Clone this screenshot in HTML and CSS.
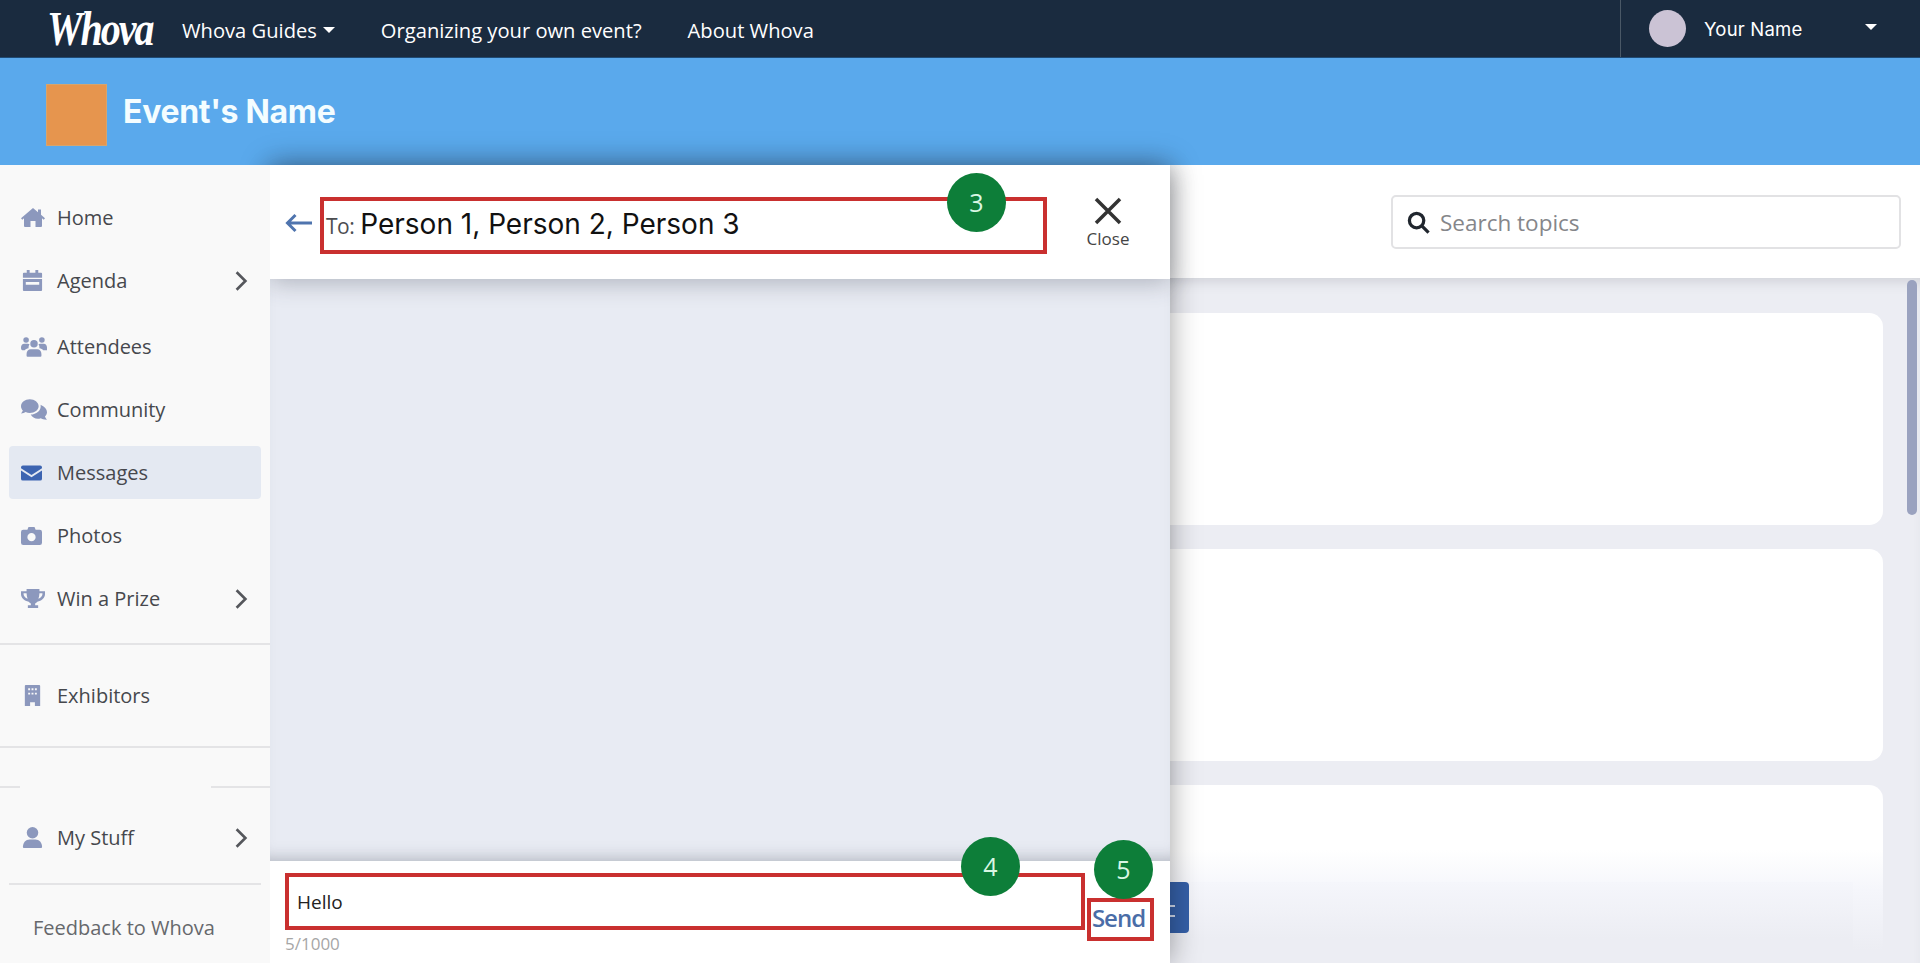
FILE: index.html
```html
<!DOCTYPE html>
<html lang="en">
<head>
<meta charset="utf-8">
<title>Whova - Messages</title>
<link rel="stylesheet" href="styles.css">
</head>
<body>
<header class="topbar">
  <div class="logo">Whova</div>
  <nav class="topnav">
    <a class="topnav-link guides">Whova Guides<span class="caret"></span></a>
    <a class="topnav-link">Organizing your own event?</a>
    <a class="topnav-link">About Whova</a>
  </nav>
  <div class="user">
    <span class="avatar"></span>
    <span class="user-name">Your Name</span>
    <span class="caret user-caret"></span>
  </div>
</header>
<section class="banner">
  <div class="event-logo"></div>
  <h1 class="event-name">Event's Name</h1>
</section>
<main class="main">
  <aside class="sidebar">
    <ul class="nav-list">
      <li class="nav-row"><svg class="nav-icon ic-home" viewBox="0 3 24 19"><path d="M12 3 0 13.2l1.300 1.500L3 13.300V21a1 1 0 0 0 1 1h5.500v-6h5v6H20a1 1 0 0 0 1-1v-7.700l1.700 1.400L24 13.200l-4-3.400V4.500h-3v2.800z"/></svg><span class="nav-text">Home</span></li>
      <li class="nav-row agenda"><svg class="nav-icon ic-tall" viewBox="0 0 24 24"><path d="M6 1h3v3h6V1h3v3h3a1 1 0 0 1 1 1v4H2V5a1 1 0 0 1 1-1h3zM2 10.500h20V22a1 1 0 0 1-1 1H3a1 1 0 0 1-1-1zm3 3v3h14v-3z"/></svg><span class="nav-text">Agenda</span><svg class="chev" viewBox="0 0 12 20"><path d="m2 2 8 8-8 8"/></svg></li>
      <li class="nav-row"><svg class="nav-icon ic-wide" viewBox="0 0 28 24"><circle cx="5.500" cy="5" r="3"/><circle cx="22.500" cy="5" r="3"/><circle cx="14" cy="9" r="4"/><path d="M0 13c0-2.500 1.500-4 3.500-4h4c.7 0 1.200.2 1.700.5-1 1.500-1.200 2.800-1 4.500-2 .4-3.200 1-4.200 2H1.500C.6 16 0 15 0 13zm28 0c0-2.500-1.500-4-3.500-4h-4c-.7 0-1.200.2-1.700.5 1 1.500 1.200 2.800 1 4.500 2 .4 3.200 1 4.200 2h4.500c.9 0 1.500-1 1.500-3zM6 20c0-3 2-5 4.500-5h7c2.500 0 4.500 2 4.500 5v2a1 1 0 0 1-1 1H7a1 1 0 0 1-1-1z"/></svg><span class="nav-text">Attendees</span></li>
      <li class="nav-row"><svg class="nav-icon ic-wide" viewBox="0 0 28 24"><path d="M9.500 1C4.300 1 0 4.300 0 8.500c0 1.800.8 3.400 2 4.700-.4 1.200-1.200 2.300-2 3.200 2 0 3.800-.7 5-1.600 1.400.6 2.900.9 4.500.9 5.200 0 9.500-3.300 9.500-7.200S14.700 1 9.500 1z"/><path d="M21 7c.2.500.2 1 .2 1.500 0 5-4.800 8.800-10.700 9 1.300 2.700 4.300 4.500 7.500 4.500 1.100 0 2.300-.2 3.300-.6 1.300.9 3 1.600 6.700 1.600-.8-.8-1.800-2.200-2.200-3.400 1.400-1.300 2.200-3 2.200-4.600 0-3.400-2.600-6.200-7-8z"/></svg><span class="nav-text">Community</span></li>
      <li class="nav-row active"><svg class="nav-icon ic-small" viewBox="0 0 28 24"><path d="M2.500 2h23A2.500 2.500 0 0 1 28 4.500v1L14 14.500 0 5.500v-1A2.500 2.500 0 0 1 2.500 2zM0 8.500l14 9 14-9v11a2.500 2.500 0 0 1-2.500 2.500h-23A2.500 2.500 0 0 1 0 19.500z"/></svg><span class="nav-text">Messages</span></li>
      <li class="nav-row"><svg class="nav-icon ic-small" viewBox="0 0 28 24"><path fill-rule="evenodd" d="M3 3.500h5.500L10 0h8l1.500 3.500H25a3 3 0 0 1 3 3V21a3 3 0 0 1-3 3H3a3 3 0 0 1-3-3V6.500a3 3 0 0 1 3-3zM14 8a5.500 5.500 0 1 0 0 11 5.500 5.500 0 0 0 0-11z"/></svg><span class="nav-text">Photos</span></li>
      <li class="nav-row"><svg class="nav-icon ic-trophy" viewBox="0 0 28 24"><path fill-rule="evenodd" d="M6.500 1h15v2.500H28V7c0 4-4 8-9 8.700-.7 1-1.500 1.700-2.500 2.100V20H20v3H8v-3h3.500v-2.200c-1-.4-1.800-1.100-2.500-2.100C4 15 0 11 0 7V3.500h6.500zm0 5H3v1c0 2 2 4.300 4.700 5.300C7 10.500 6.600 8.500 6.500 6zm15 0c-.1 2.500-.5 4.500-1.200 6.300C23 11.300 25 9 25 7V6z"/></svg><span class="nav-text">Win a Prize</span><svg class="chev" viewBox="0 0 12 20"><path d="m2 2 8 8-8 8"/></svg></li>
    </ul>
    <hr class="rule first-rule">
    <div class="nav-row exhibitors"><svg class="nav-icon ic-tall" viewBox="0 0 24 24"><path fill-rule="evenodd" d="M5 1h14a1 1 0 0 1 1 1v21h-5.500v-4h-5v4H4V2a1 1 0 0 1 1-1zm2.500 3.500v2h2v-2zm3.500 0v2h2v-2zm3.500 0v2h2v-2zM7.500 9v2h2V9zM11 9v2h2V9zm3.500 0v2h2V9z"/></svg><span class="nav-text">Exhibitors</span></div>
    <hr class="rule second-rule">
    <div class="split-rule"><span class="split-left"></span><span class="split-right"></span></div>
    <div class="nav-row mystuff"><svg class="nav-icon ic-tall" viewBox="0 0 24 24"><circle cx="12" cy="7" r="6"/><path d="M2 22c0-5 3-8 7-8h6c4 0 7 3 7 8a1 1 0 0 1-1 1H3a1 1 0 0 1-1-1z"/></svg><span class="nav-text">My Stuff</span><svg class="chev" viewBox="0 0 12 20"><path d="m2 2 8 8-8 8"/></svg></div>
    <hr class="rule inset-rule">
    <a class="feedback">Feedback to Whova</a>
  </aside>

  <section class="modal">
    <div class="modal-head">
      <svg class="back" viewBox="0 0 28 20"><path d="M27 10H3M10.500 2 2.500 10l8 8"/></svg>
      <div class="to-box">
        <span class="to-label">To:</span>
        <span class="to-names">Person 1, Person 2, Person 3</span>
        <span class="step step-3">3</span>
      </div>
      <div class="close">
        <svg class="close-x" viewBox="0 0 28 28"><path d="m2 2 24 24M26 2 2 26"/></svg>
        <span class="close-text">Close</span>
      </div>
    </div>
    <div class="thread"></div>
    <div class="composer">
      <div class="composer-row">
        <div class="msg-box">Hello<span class="step step-4">4</span></div>
        <div class="send-box">Send<span class="step step-5">5</span></div>
      </div>
      <div class="counter">5/1000</div>
    </div>
  </section>

  <section class="topics">
    <div class="topics-head">
      <div class="search">
        <svg class="search-icon" viewBox="0 0 24 24"><circle cx="10" cy="10" r="7.500"/><path d="m15.500 15.500 7 7"/></svg>
        <span class="search-text">Search topics</span>
      </div>
    </div>
    <div class="topics-body">
      <div class="card"></div>
      <div class="card"></div>
      <div class="card card-last"></div>
      <div class="fade"></div>
      <div class="clipped-btn"></div>
      <div class="scroll-thumb"></div>
    </div>
  </section>
</main>
</body>
</html>
```
FILE: styles.css
```css
* { box-sizing: border-box; }
html, body { margin: 0; height: 963px; overflow: hidden; }
body {
  width: 1920px;
  font-family: "Open Sans", "Noto Sans", sans-serif;
  color: #46484d;
  background: #ecedf3;
  display: flex;
  flex-direction: column;
}

/* top bar */
.topbar {
  height: 58px;
  flex: none;
  background: #1a2b3f;
  border-bottom: 1px solid #1f4a74;
  display: flex;
  align-items: center;
  color: #fff;
  position: relative;
  z-index: 5;
}
.logo {
  margin-left: 47px;
  width: 110px;
  font: italic 700 40px/58px "Liberation Serif", serif;
  letter-spacing: -2px;
  transform: scaleY(1.2);
}
.topnav { display: flex; margin-left: 25px; gap: 46px; font-size: 20.150px; padding-top: 2px; }
.topnav-link { color: #fff; display: flex; align-items: center; white-space: nowrap; }
.caret {
  width: 0; height: 0;
  border-left: 6px solid transparent;
  border-right: 6px solid transparent;
  border-top: 6px solid #fff;
  margin-left: 6px;
}
.user {
  margin-left: auto;
  width: 300px;
  height: 57px;
  border-left: 1px solid #4a5866;
  display: flex;
  align-items: center;
  padding-left: 28px;
}
.avatar { width: 37px; height: 37px; border-radius: 50%; background: #cbc3d5; }
.user-name { margin-left: 18px; font: 400 18.500px "Inter", sans-serif; letter-spacing: .2px; padding-top: 1px; }
.user-caret { margin-left: auto; margin-right: 43px; margin-top: -3px; }

/* banner */
.banner {
  height: 107px;
  flex: none;
  background: #5aa9ec;
  display: flex;
  align-items: center;
  padding-left: 46px;
}
.event-logo { width: 61px; height: 62px; background: #e6954e; border: 1px solid #d6a56e; margin-top: 6px; }
.event-name {
  margin: 0 0 0 16px;
  font: 700 32px "Inter", sans-serif;
  color: #f4fdff;
  letter-spacing: -.3px;
}

/* layout */
.main { flex: 1; display: flex; min-height: 0; }

/* sidebar */
.sidebar {
  width: 270px;
  flex: none;
  background: #f9f9f9;
  position: relative;
  z-index: 3;
  padding-top: 26px;
}
.nav-list { list-style: none; margin: 0; padding: 0; display: flex; flex-direction: column; gap: 10px; }
.nav-row {
  height: 53px;
  margin: 0 9px;
  padding: 0 13px 0 12px;
  display: grid;
  grid-template-columns: 36px 1fr auto;
  align-items: center;
  font-size: 20px;
  border-radius: 4px;
}
.agenda { margin-bottom: 3px; }
.active { background: #e4e9f2; }
.active .nav-icon { fill: #3c64b1; }
.nav-icon { fill: #8c98bd; display: block; }
.ic-home { width: 24px; height: 21px; }
.ic-tall { width: 23px; height: 23px; }
.ic-wide { width: 26px; height: 23px; }
.ic-small { width: 21px; height: 18px; }
.ic-trophy { width: 24px; height: 21px; }
.nav-text { white-space: nowrap; }
.chev { width: 14px; height: 22px; fill: none; stroke: #55575c; stroke-width: 2.400; }
.rule { border: 0; border-top: 2px solid #e4e4e6; margin: 0; }
.first-rule { margin-top: 18px; }
.exhibitors { margin-top: 24px; }
.second-rule { margin-top: 24px; }
.split-rule { display: flex; justify-content: space-between; margin-top: 38px; }
.split-left { width: 20px; border-top: 2px solid #e4e4e6; }
.split-right { width: 59px; border-top: 2px solid #e4e4e6; }
.mystuff { margin-top: 23px; }
.inset-rule { margin: 19px 9px 0; }
.feedback { display: block; margin: 29px 0 0 33px; font-size: 20px; color: #66686c; white-space: nowrap; }

/* modal */
.modal {
  width: 900px;
  flex: none;
  display: flex;
  flex-direction: column;
  position: relative;
  z-index: 2;
  box-shadow: 0 0 28px rgba(0, 0, 0, .38);
  background: #e8ebf3;
}
.modal-head {
  height: 114px;
  flex: none;
  background: #fff;
  display: flex;
  align-items: center;
  padding-left: 15px;
  box-shadow: 0 4px 22px rgba(60, 65, 80, .32);
  position: relative;
  z-index: 1;
}
.back { width: 28px; height: 20px; fill: none; stroke: #4f74ae; stroke-width: 3; flex: none; margin-right: 7px; margin-top: 2px; }
.to-box {
  width: 727px;
  height: 57px;
  border: 4px solid #c9302f;
  display: flex;
  align-items: center;
  padding: 0 0 3px 2px;
  position: relative;
  margin-top: 7px;
}
.to-label { font-size: 21px; color: #4c4d50; margin-right: 6px; letter-spacing: -.5px; padding-top: 3px; }
.to-names { font: 400 28px "Inter", sans-serif; color: #111; white-space: nowrap; }
.close {
  margin-left: 39px;
  width: 44px;
  display: flex;
  flex-direction: column;
  align-items: center;
  margin-top: 2px;
}
.close-x { width: 28px; height: 28px; fill: none; stroke: #333; stroke-width: 3.500; }
.close-text { font-size: 17px; color: #444; margin-top: 2px; white-space: nowrap; }
.thread { flex: 1; box-shadow: inset 0 -14px 16px -12px rgba(70, 75, 90, .35); }
.composer { height: 102px; flex: none; background: #fff; padding: 12px 0 0 15px; }
.composer-row { display: flex; gap: 2px; }
.msg-box {
  width: 800px;
  height: 57px;
  border: 4px solid #c9302f;
  display: flex;
  align-items: center;
  padding: 1px 0 0 8px;
  font-size: 19px;
  color: #222;
  position: relative;
}
.send-box {
  width: 67px;
  height: 43px;
  margin-top: 25px;
  border: 4px solid #c9302f;
  font-size: 24px;
  font-weight: 600;
  letter-spacing: -1px;
  color: #4a6da7;
  display: flex;
  align-items: center;
  justify-content: center;
  padding: 0 4px 4px 0;
  position: relative;
}
.counter { font-size: 17px; color: #a6a6a6; line-height: 20px; margin-top: -7px; }
.step {
  position: absolute;
  width: 59px;
  height: 59px;
  border-radius: 50%;
  background: #0d7e39;
  color: #d9f7e4;
  font: 400 25px/59px "Open Sans", sans-serif;
  letter-spacing: 0;
  text-align: center;
  z-index: 2;
}
.step-3 { top: -28px; left: 623px; }
.step-4 { top: -40px; right: 61px; }
.step-5 { top: -62px; right: -3px; }

/* right panel */
.topics { flex: 1; display: flex; flex-direction: column; min-width: 0; position: relative; }
.topics-head {
  height: 113px;
  flex: none;
  background: #fff;
  display: flex;
  align-items: flex-start;
  justify-content: flex-end;
  padding: 30px 19px 0 0;
}
.search {
  width: 510px;
  height: 54px;
  border: 2px solid #e2e2e4;
  border-radius: 5px;
  display: flex;
  align-items: center;
  padding-left: 14px;
}
.search-icon { width: 23px; height: 23px; fill: none; stroke: #20262e; stroke-width: 3.400; flex: none; }
.search-text { margin-left: 10px; font-size: 22.500px; color: #85868a; }
.topics-body {
  flex: 1;
  min-height: 0;
  position: relative;
  overflow: hidden;
  background: #ecedf3;
  box-shadow: inset 0 10px 14px -8px rgba(80, 85, 95, .22);
  padding: 35px 37px 0 0;
  display: flex;
  flex-direction: column;
  gap: 24px;
}
.card { height: 212px; flex: none; background: #fff; border-radius: 0 14px 14px 0; }
.card-last { background: linear-gradient(#fff 65px, #f5f6fb 105px, #ecedf3 165px); }
.fade {
  position: absolute;
  left: 0; right: 67px; bottom: 0;
  height: 81px;
  background: linear-gradient(#f5f6fb, #ecedf3 70%);
}
.clipped-btn {
  position: absolute;
  left: 0;
  top: 604px;
  width: 19px;
  height: 51px;
  background: #3560a8;
  border-radius: 0 4px 4px 0;
}
.clipped-btn::before {
  content: "";
  position: absolute;
  left: 0;
  top: 23px;
  width: 5px;
  height: 8px;
  border-top: 2px solid #cfd9ec;
  border-bottom: 2px solid #cfd9ec;
}
.scroll-thumb {
  position: absolute;
  top: 2px;
  right: 3px;
  width: 10px;
  height: 235px;
  background: #9aa2bf;
  border-radius: 5px;
}
```
